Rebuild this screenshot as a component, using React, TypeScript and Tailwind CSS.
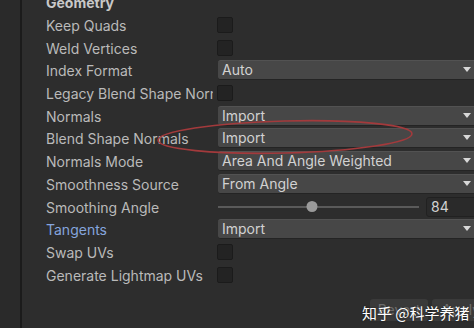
import React from "react";

type Row =
  | { label: string; kind: "check"; blue?: boolean }
  | { label: string; kind: "select"; value: string; blue?: boolean }
  | { label: string; kind: "slider"; value: number; blue?: boolean };

const rows: Row[] = [
  { label: "Keep Quads", kind: "check" },
  { label: "Weld Vertices", kind: "check" },
  { label: "Index Format", kind: "select", value: "Auto" },
  { label: "Legacy Blend Shape Normals", kind: "check" },
  { label: "Normals", kind: "select", value: "Import" },
  { label: "Blend Shape Normals", kind: "select", value: "Import" },
  { label: "Normals Mode", kind: "select", value: "Area And Angle Weighted" },
  { label: "Smoothness Source", kind: "select", value: "From Angle" },
  { label: "Smoothing Angle", kind: "slider", value: 84 },
  { label: "Tangents", kind: "select", value: "Import", blue: true },
  { label: "Swap UVs", kind: "check" },
  { label: "Generate Lightmap UVs", kind: "check" },
];

function Checkbox() {
  return <div className="w-[16px] h-[16px] rounded-[2px] bg-[#232323] border border-[#1b1b1b]" />;
}

function Select({ value }: { value: string }) {
  return (
    <div className="ml-px w-[262px] h-[20px] flex items-center justify-between rounded-[3px] bg-[#474747] border-t border-t-[#525252] border-b border-b-[#242424] pl-[4px] pr-[9px]">
      <span className="text-[#d2d2d2] text-[14px] leading-none">{value}</span>
      <svg width="8" height="6" viewBox="0 0 8 6">
        <path d="M0 0 L8 0 L4 5 Z" fill="#d8d8d8" />
      </svg>
    </div>
  );
}

function Slider({ value }: { value: number }) {
  const pct = 47;
  return (
    <div className="ml-px flex items-center gap-[7px]">
      <div className="relative w-[201px] h-[20px] flex items-center">
        <div className="w-full h-[2px] bg-[#5a5a5a]" />
        <div
          className="absolute w-[11px] h-[11px] rounded-full bg-[#9a9a9a] -translate-x-1/2"
          style={{ left: `${pct}%` }}
        />
      </div>
      <div className="w-[60px] h-[20px] flex items-center rounded-[3px] bg-[#2a2a2a] border border-[#212121] pl-[4px]">
        <span className="text-[#d2d2d2] text-[14px] leading-none">{value}</span>
      </div>
    </div>
  );
}

export default function App() {
  return (
    <div
      className="relative w-[474px] h-[328px] overflow-hidden bg-[#2d2d2d] flex"
      style={{ fontFamily: "Inter, 'Noto Sans', sans-serif" }}
    >
      <div className="w-[22px] shrink-0 bg-[#2a2a2a] border-r-2 border-r-[#1b1b1b]" />
      <div className="flex-1 flex flex-col pl-[22px] -mt-[9px]">
        <div className="h-[22.7px] flex items-center pl-[2px]">
          <span className="text-[#c8c8c8] text-[14px] font-bold">Geometry</span>
        </div>
        {rows.map((r) => (
          <div key={r.label} className="h-[22.7px] flex items-center">
            <div className="w-[169px] pl-[2px] mr-[4px] overflow-hidden whitespace-nowrap">
              <span className={`text-[14px] ${r.blue ? "text-[#85a5dd]" : "text-[#bababa]"}`}>{r.label}</span>
            </div>
            {r.kind === "check" && <Checkbox />}
            {r.kind === "select" && <Select value={r.value} />}
            {r.kind === "slider" && <Slider value={r.value} />}
          </div>
        ))}
        <div className="mt-[13px] flex gap-[4px] pl-[326px]">
          <div className="w-[58px] h-[22px] rounded-[3px] bg-[#3a3a3a] flex items-center justify-center">
            <span className="text-[#6e6e6e] text-[14px]">Revert</span>
          </div>
          <div className="w-[58px] h-[22px] rounded-[3px] bg-[#3a3a3a] flex items-center justify-center">
            <span className="text-[#6e6e6e] text-[14px]">Apply</span>
          </div>
        </div>
      </div>

      <svg className="absolute left-0 top-0 pointer-events-none" width="474" height="328">
        <ellipse
          cx="285"
          cy="137"
          rx="127"
          ry="16"
          fill="none"
          stroke="#a33a3c"
          strokeWidth="1.6"
          transform="rotate(-1.5 285 137)"
        />
      </svg>

      <div
        className="absolute left-[362px] top-[305px] text-white text-[15px] leading-none whitespace-nowrap"
        style={{ fontFamily: "'Noto Sans CJK SC', sans-serif", textShadow: "0 0 2px rgba(0,0,0,0.6)" }}
      >
        知乎 @科学养猪
      </div>
    </div>
  );
}
